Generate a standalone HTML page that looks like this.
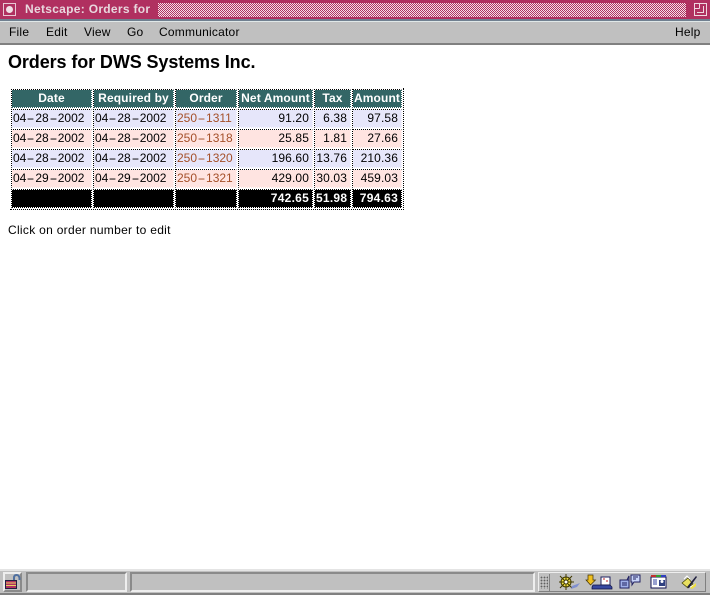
<!DOCTYPE html>
<html><head><meta charset="utf-8"><title>Netscape: Orders for</title>
<style>
html,body{margin:0;padding:0;width:710px;height:595px;overflow:hidden;background:#fff}
body{position:relative;font-family:"Liberation Sans",sans-serif;color:#000;font-size:12px}
div{position:absolute;white-space:nowrap;box-sizing:border-box}
.m{top:25px;font-size:12px;letter-spacing:.22px;line-height:15px;color:#000}
.c{--c:#fff;height:19px;line-height:16px;font-size:12px;padding:0 3px 0 1px;
border-style:dotted;border-width:1px;border-color:#000 #fff #fff #000;
background:linear-gradient(var(--c),var(--c)) 1px 1px/100% 100% no-repeat;background-origin:border-box;background-clip:border-box}
.h{--c:#336666;color:#fff;font-weight:bold;text-align:center;letter-spacing:.12px;padding:0}
.b{--c:#e6e6fa}.p{--c:#ffe4e1}
.r{text-align:right;letter-spacing:.12px}
.o{color:#a5502a}
.t{--c:#000;color:#fff;font-weight:bold;text-align:right;letter-spacing:.25px}
.d{display:inline-block;width:9px;text-align:center;transform:scaleX(2)}
.sunk{border:2px solid;border-color:#8a8a8a #eee #eee #8a8a8a;background:#c0c0c0}
</style></head><body>
<!-- title bar -->
<div style="left:0;top:0;width:710px;height:19px;background:#b03060"></div>
<div style="left:0;top:19px;width:710px;height:2px;background:#708090"></div>
<div style="left:3px;top:3px;width:13px;height:13px;border:1px solid #e8c8d4"></div>
<div style="left:6px;top:6px;width:7px;height:7px;border-radius:50%;background:#f0e0e6"></div>
<div style="left:25px;top:1px;font-weight:bold;font-size:12px;letter-spacing:.3px;line-height:16px;color:#e8d8de">Netscape: Orders for</div>
<svg style="position:absolute;left:158px;top:3px" width="528" height="14" shape-rendering="crispEdges"><defs><pattern id="dp" width="2" height="2" patternUnits="userSpaceOnUse"><rect width="2" height="2" fill="#b03060"/><rect width="1" height="1" fill="#f4e0e8"/><rect x="1" y="1" width="1" height="1" fill="#f4e0e8"/></pattern></defs><rect width="528" height="14" fill="url(#dp)"/></svg>
<svg style="position:absolute;left:694px;top:3px" width="13" height="13"><path d="M.5.5h12v12H.5zM5.500.5v5M5.500 5.500h-5M9.500 3v6.500H3" fill="none" stroke="#f0d8e0"/></svg>
<!-- menu -->
<div style="left:0;top:21px;width:710px;height:24px;background:#c0c0c0;border-top:1px solid #e0e8e8;border-bottom:2px solid #808080"></div>
<div class="m" style="left:9px">File</div>
<div class="m" style="left:46px">Edit</div>
<div class="m" style="left:84px">View</div>
<div class="m" style="left:127px">Go</div>
<div class="m" style="left:159px">Communicator</div>
<div class="m" style="left:675px">Help</div>
<!-- heading -->
<div style="left:8px;top:51px;font-weight:bold;font-size:18px;line-height:22px;letter-spacing:-.1px">Orders for DWS Systems Inc.</div>
<!-- table outer right/bottom -->
<div style="left:10px;top:88px;width:394px;height:122px;border-style:dotted;border-width:0 1px 1px 0;border-color:#000"></div>
<!-- header -->
<div class="c h" style="left:11px;top:89px;width:81px">Date</div>
<div class="c h" style="left:93px;top:89px;width:81px">Required by</div>
<div class="c h" style="left:175px;top:89px;width:62px">Order</div>
<div class="c h" style="left:238px;top:89px;width:75px">Net Amount</div>
<div class="c h" style="left:314px;top:89px;width:37px">Tax</div>
<div class="c h" style="left:352px;top:89px;width:50px">Amount</div>
<!-- row 1 -->
<div class="c b" style="left:11px;top:109px;width:81px">04<span class="d">-</span>28<span class="d">-</span>2002</div>
<div class="c b" style="left:93px;top:109px;width:81px">04<span class="d">-</span>28<span class="d">-</span>2002</div>
<div class="c b o" style="left:175px;top:109px;width:62px">250<span class="d">-</span>1311</div>
<div class="c b r" style="left:238px;top:109px;width:75px">91.20</div>
<div class="c b r" style="left:314px;top:109px;width:37px">6.38</div>
<div class="c b r" style="left:352px;top:109px;width:50px">97.58</div>
<!-- row 2 -->
<div class="c p" style="left:11px;top:129px;width:81px">04<span class="d">-</span>28<span class="d">-</span>2002</div>
<div class="c p" style="left:93px;top:129px;width:81px">04<span class="d">-</span>28<span class="d">-</span>2002</div>
<div class="c p o" style="left:175px;top:129px;width:62px">250<span class="d">-</span>1318</div>
<div class="c p r" style="left:238px;top:129px;width:75px">25.85</div>
<div class="c p r" style="left:314px;top:129px;width:37px">1.81</div>
<div class="c p r" style="left:352px;top:129px;width:50px">27.66</div>
<!-- row 3 -->
<div class="c b" style="left:11px;top:149px;width:81px">04<span class="d">-</span>28<span class="d">-</span>2002</div>
<div class="c b" style="left:93px;top:149px;width:81px">04<span class="d">-</span>28<span class="d">-</span>2002</div>
<div class="c b o" style="left:175px;top:149px;width:62px">250<span class="d">-</span>1320</div>
<div class="c b r" style="left:238px;top:149px;width:75px">196.60</div>
<div class="c b r" style="left:314px;top:149px;width:37px">13.76</div>
<div class="c b r" style="left:352px;top:149px;width:50px">210.36</div>
<!-- row 4 -->
<div class="c p" style="left:11px;top:169px;width:81px">04<span class="d">-</span>29<span class="d">-</span>2002</div>
<div class="c p" style="left:93px;top:169px;width:81px">04<span class="d">-</span>29<span class="d">-</span>2002</div>
<div class="c p o" style="left:175px;top:169px;width:62px">250<span class="d">-</span>1321</div>
<div class="c p r" style="left:238px;top:169px;width:75px">429.00</div>
<div class="c p r" style="left:314px;top:169px;width:37px">30.03</div>
<div class="c p r" style="left:352px;top:169px;width:50px">459.03</div>
<!-- totals -->
<div class="c t" style="left:11px;top:189px;width:81px"></div>
<div class="c t" style="left:93px;top:189px;width:81px"></div>
<div class="c t" style="left:175px;top:189px;width:62px"></div>
<div class="c t" style="left:238px;top:189px;width:75px">742.65</div>
<div class="c t" style="left:314px;top:189px;width:37px">51.98</div>
<div class="c t" style="left:352px;top:189px;width:50px">794.63</div>
<div style="left:8px;top:223px;line-height:15px;letter-spacing:.3px">Click on order number to edit</div>
<!-- status bar -->
<div style="left:0;top:569px;width:710px;height:26px;background:#c0c0c0;border-top:2px solid #e4e4e4"></div>
<div style="left:0;top:593px;width:710px;height:2px;background:#808080"></div>
<div class="sunk" style="left:3px;top:572px;width:19px;height:20px;border-color:#eee #8a8a8a #8a8a8a #eee"></div>
<svg style="position:absolute;left:4px;top:574px" width="17" height="16"><path d="M10 7V4q0-3 2.500-3T15.500 4v2" fill="none" stroke="#5070a0" stroke-width="2"/><rect x="1.500" y="6.500" width="11" height="8" fill="#b03060" stroke="#202040"/><path d="M2 9h10M2 11.500h10" stroke="#e8d060"/></svg>
<div class="sunk" style="left:26px;top:572px;width:101px;height:20px"></div>
<div class="sunk" style="left:130px;top:572px;width:405px;height:20px"></div>
<div style="left:538px;top:572px;width:168px;height:20px;border:1px solid;border-color:#eee #808080 #808080 #eee"></div>
<div style="left:549px;top:574px;width:1px;height:17px;background:#808080"></div>
<div style="left:540px;top:576px;width:8px;height:13px;background-image:radial-gradient(#606060 .7px,transparent 1px);background-size:3px 3px"></div>
<svg style="position:absolute;left:556px;top:574px" width="150" height="17">
<!-- navigator wheel -->
<g stroke="#403800" fill="none"><circle cx="10" cy="8" r="5" fill="#f0e040"/><path d="M10 0v16M3 8h15M4 2l12 12M16 2L4 14"/></g>
<circle cx="10" cy="8" r="2" fill="#fff" stroke="#403800"/>
<path d="M16 12l8-3-3 4-6 2z" fill="#8090d0"/>
<!-- inbox -->
<path d="M32 1h5v5h2.500L34.500 11 30 6h2z" fill="#f0c020" stroke="#403000" stroke-width=".7"/>
<rect x="45" y="3" width="9" height="8" fill="#fff" stroke="#202060"/><path d="M47 5h2M50 7h2" stroke="#c02020"/>
<path d="M37 11h17l2 2v2H36v-2z" fill="#3848a0" stroke="#101040" stroke-width=".7"/>
<!-- discussion -->
<path d="M64 6h9v8h-9zM71 6l2-4v4" fill="#a0b0e8" stroke="#202060"/><path d="M66 9h5M66 11h5" stroke="#202060"/>
<path d="M75 1h9v7h-6l-2 3V8h-1z" fill="#c8d4f8" stroke="#202060"/><path d="M77 3h5M77 5h3" stroke="#202060"/>
<!-- composer/address -->
<rect x="95" y="3" width="15" height="11" fill="#fff" stroke="#101050"/><path d="M95 2h5" stroke="#c03030" stroke-width="2"/><path d="M100 2h5" stroke="#30a030" stroke-width="2"/><path d="M105 2h5" stroke="#3040c0" stroke-width="2"/>
<path d="M97 6h4M97 8h4M97 10h4" stroke="#3040a0"/><rect x="103" y="6" width="6" height="6" fill="#304080"/><circle cx="106" cy="7.500" r="1.500" fill="#fff"/>
<!-- pen -->
<path d="M126 9l6-5 5 6-5 4z" fill="#e8e060" stroke="#404000" stroke-width=".7"/><path d="M128 5l3-3 3 3M134 13l6-3" stroke="#fff" fill="none"/>
<path d="M131 13L140 2l1 1-8 11z" fill="#202040"/>
<path d="M134 14l6-5v3l-4 3z" fill="#f0e040"/>
</svg>
</body></html>
